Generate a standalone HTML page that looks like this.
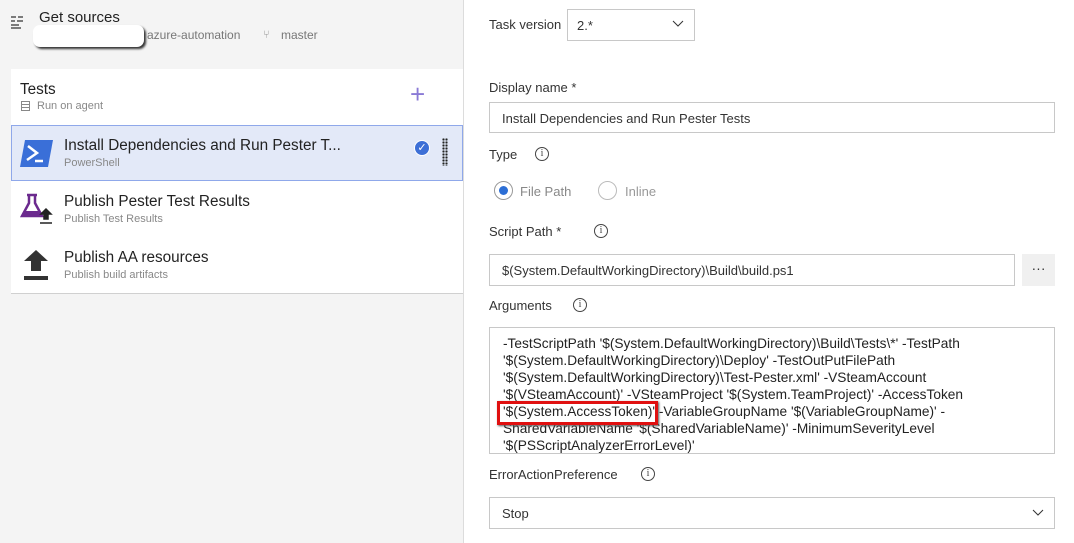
<!DOCTYPE html><html><head><meta charset="utf-8"><style>
*{box-sizing:border-box;margin:0;padding:0}
body{width:1074px;height:543px;overflow:hidden;font-family:"Liberation Sans",sans-serif;color:#212121;background:#fff;position:relative}
.a{position:absolute}
.lp{left:0;top:0;width:464px;height:543px;background:#f4f4f4;border-right:1px solid #dcdcdc}
.card{left:11px;top:69px;width:452px;height:225px;background:#fff;border-bottom:1px solid #d0d0d0}
.t{font-size:15.3px;color:#222}
.s{font-size:11px;color:#888}
.lbl{font-size:13px;color:#333}
.box{border:1px solid #c8c8c8;background:#fff}
.info{width:14px;height:14px;border:1px solid #444;border-radius:50%;font-size:10px;text-align:center;line-height:12px;color:#444;font-family:"Liberation Serif",serif}
.arg{font-size:13.7px;line-height:17px;color:#222;white-space:nowrap}
</style></head><body>
<div class="a lp"></div>
<svg class="a" style="left:10px;top:15px" width="14" height="14"><path d="M1 2h5M8 2h5M1 6h4M7 6h6M1 10h8M1 13h10" stroke="#333" stroke-width="1.2"/></svg>
<div class="a" style="left:39px;top:9px;font-size:15px;color:#222">Get sources</div>
<div class="a" style="left:33px;top:25px;width:111px;height:22px;background:#fff;border-radius:7px;box-shadow:2px 2px 2px #333"></div>
<div class="a s" style="left:147px;top:28px;font-size:12px;color:#777">azure-automation</div>
<div class="a s" style="left:263px;top:29px;font-size:11px;color:#999">⑂</div>
<div class="a s" style="left:281px;top:28px;font-size:12px;color:#777">master</div>
<div class="a card"></div>
<div class="a t" style="left:20px;top:81px">Tests</div>
<div class="a" style="left:21px;top:101px;width:9px;height:10px;border:1px solid #888;background:repeating-linear-gradient(#fff 0 2px,#888 2px 3px)"></div>
<div class="a s" style="left:37px;top:100px">Run on agent</div>
<div class="a" style="left:410px;top:79px;font-size:26px;color:#8a7ad6;font-weight:300;line-height:30px">+</div>
<div class="a" style="left:11px;top:125px;width:452px;height:56px;background:#e3e9f8;border:1px solid #8fa8ea"></div>
<svg class="a" style="left:20px;top:140px" width="33" height="27"><path d="M5 0h28l-5 27H0z" fill="#3a6fd8"/><path d="M8 6l9 7-10 7M15 21h8" stroke="#fff" stroke-width="2.5" fill="none"/></svg>
<div class="a t" style="left:64px;top:137px">Install Dependencies and Run Pester T...</div>
<div class="a s" style="left:64px;top:157px">PowerShell</div>
<div class="a" style="left:414px;top:140px;width:16px;height:16px;border-radius:50%;background:#3d6fd6;border:1px solid #fff;color:#fff;font-size:11px;text-align:center;line-height:15px">✓</div>
<div class="a" style="left:442px;top:138px;width:6px;height:28px;background:radial-gradient(circle,#222 1px,transparent 1.3px) 0 0/3px 3px"></div>
<svg class="a" style="left:20px;top:193px" width="34" height="34"><path d="M7 2h10M9 2v8L2 23h20L15 10V2" stroke="#6b2a8e" stroke-width="2.5" fill="none"/><path d="M5 18h13l3 5H3z" fill="#6b2a8e"/><path d="M26 16l-5 5h3v5h4v-5h3zM20 30h12" stroke="#222" fill="#222" stroke-width="1.5"/></svg>
<div class="a t" style="left:64px;top:193px">Publish Pester Test Results</div>
<div class="a s" style="left:64px;top:213px">Publish Test Results</div>
<svg class="a" style="left:24px;top:250px" width="26" height="32"><path d="M12 0L0 11h7v10h10V11h7z" fill="#333"/><rect x="0" y="26" width="24" height="4" fill="#333"/></svg>
<div class="a t" style="left:64px;top:249px">Publish AA resources</div>
<div class="a s" style="left:64px;top:269px">Publish build artifacts</div>

<div class="a lbl" style="left:489px;top:17px">Task version</div>
<div class="a box" style="left:567px;top:9px;width:128px;height:32px"></div>
<div class="a lbl" style="left:577px;top:18px">2.*</div>
<svg class="a" style="left:672px;top:20px" width="12" height="8"><path d="M1 1l5 5 5-5" stroke="#333" fill="none"/></svg>
<div class="a lbl" style="left:489px;top:80px">Display name *</div>
<div class="a box" style="left:489px;top:102px;width:566px;height:31px"></div>
<div class="a lbl" style="left:502px;top:111px">Install Dependencies and Run Pester Tests</div>
<div class="a lbl" style="left:489px;top:147px">Type</div>
<div class="a info" style="left:535px;top:147px">i</div>
<div class="a" style="left:494px;top:181px;width:19px;height:19px;border:1px solid #999;border-radius:50%"></div>
<div class="a" style="left:499px;top:186px;width:9px;height:9px;background:#2c6ed5;border-radius:50%"></div>
<div class="a lbl" style="left:520px;top:184px;color:#888">File Path</div>
<div class="a" style="left:598px;top:181px;width:19px;height:19px;border:1px solid #bbb;border-radius:50%"></div>
<div class="a lbl" style="left:625px;top:184px;color:#999">Inline</div>
<div class="a lbl" style="left:489px;top:224px">Script Path *</div>
<div class="a info" style="left:594px;top:224px">i</div>
<div class="a box" style="left:489px;top:254px;width:526px;height:32px"></div>
<div class="a lbl" style="left:502px;top:263px">$(System.DefaultWorkingDirectory)\Build\build.ps1</div>
<div class="a" style="left:1022px;top:254px;width:33px;height:32px;background:#f0f0f0;text-align:center;font-size:14px;line-height:28px;color:#333">···</div>
<div class="a lbl" style="left:489px;top:298px">Arguments</div>
<div class="a info" style="left:573px;top:298px">i</div>
<div class="a box" style="left:489px;top:327px;width:566px;height:127px"></div>
<div class="a arg" style="left:503px;top:335px">-TestScriptPath '$(System.DefaultWorkingDirectory)\Build\Tests\*' -TestPath<br>'$(System.DefaultWorkingDirectory)\Deploy' -TestOutPutFilePath<br>'$(System.DefaultWorkingDirectory)\Test-Pester.xml' -VSteamAccount<br>'$(VSteamAccount)' -VSteamProject '$(System.TeamProject)' -AccessToken<br>'$(System.AccessToken)' -VariableGroupName '$(VariableGroupName)' -<br>SharedVariableName '$(SharedVariableName)' -MinimumSeverityLevel<br>'$(PSScriptAnalyzerErrorLevel)'</div>
<div class="a" style="left:497px;top:401px;width:161px;height:24px;border:3px solid #e01010;box-shadow:1px 1px 2px #555"></div>
<div class="a lbl" style="left:489px;top:467px">ErrorActionPreference</div>
<div class="a info" style="left:641px;top:467px">i</div>
<div class="a box" style="left:489px;top:497px;width:566px;height:32px"></div>
<div class="a lbl" style="left:502px;top:506px">Stop</div>
<svg class="a" style="left:1032px;top:509px" width="12" height="8"><path d="M1 1l5 5 5-5" stroke="#333" fill="none"/></svg>
</body></html>
